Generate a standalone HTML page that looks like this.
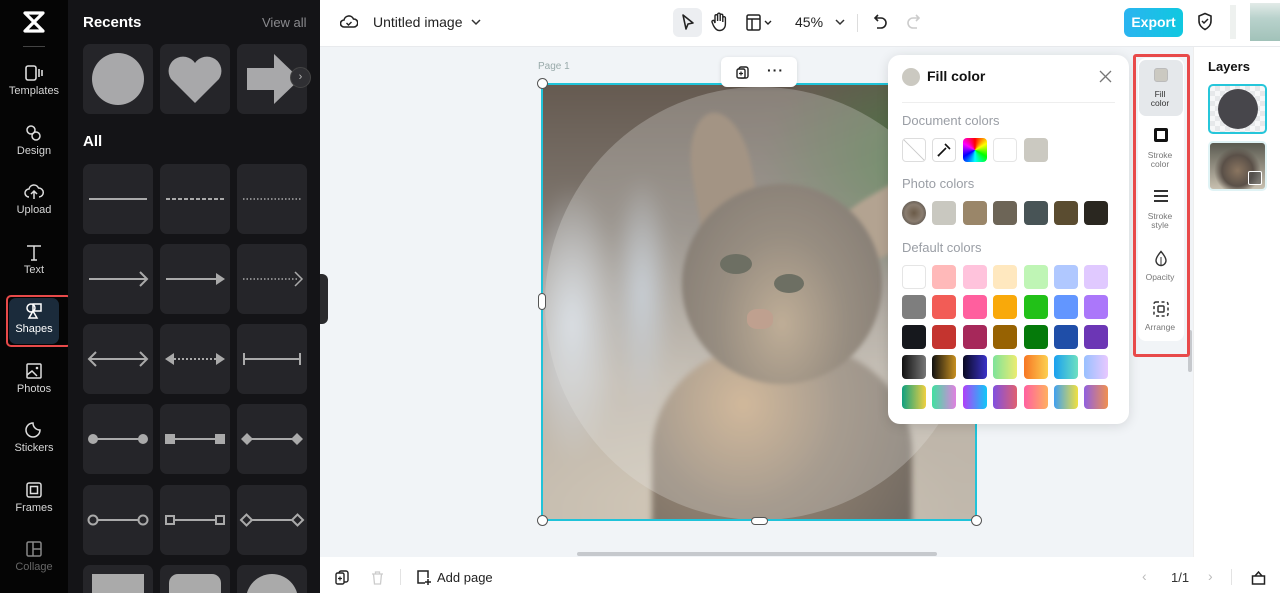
<!DOCTYPE html>
<html style="overflow:hidden;width:1280px;height:593px"><head><meta charset="utf-8">
<style>
*{box-sizing:border-box;margin:0;padding:0}
body{width:1280px;height:593px;overflow:hidden;font-family:"Liberation Sans",sans-serif;background:#f1f4f7;position:relative}
.abs{position:absolute}
.rail{left:0;top:0;width:68px;height:593px;background:#050505}
.ri{position:absolute;left:0;width:68px;text-align:center;color:#d6d6d6;font-size:11px}
.ri svg{display:block;margin:0 auto 3px}
.panel{left:68px;top:0;width:252px;height:593px;background:#141417}
.tile{position:absolute;width:70px;height:70px;background:#252529;border-radius:7px}
.tile svg{position:absolute;left:0;top:0}
.top{left:320px;top:0;width:960px;height:47px;background:#fff;border-bottom:1px solid #e8eaed}
.bot{left:320px;top:557px;width:960px;height:36px;background:#fff}
.sw{position:absolute;width:24px;height:24px;border-radius:4px}
.lbl{position:absolute;left:14px;font-size:13px;color:#9a9ea5}
.tool{position:absolute;left:0;width:44px;text-align:center;font-size:8.5px;color:#777;line-height:9px}
</style></head><body>

<!-- left rail -->
<div class="abs rail">
  <svg class="abs" style="left:22px;top:11px" width="24" height="22" viewBox="0 0 24 22"><path d="M3 2h18L3 20h18Z" fill="none" stroke="#fff" stroke-width="3.2" stroke-linejoin="round"/></svg>
  <div class="abs" style="left:23px;top:46px;width:22px;height:1px;background:#444"></div>
  <div class="ri" style="top:64px"><svg width="20" height="18" viewBox="0 0 20 18"><rect x="2" y="2" width="10" height="14" rx="2" fill="none" stroke="#ddd" stroke-width="1.6"/><path d="M15 5v8M18 6v6" stroke="#ddd" stroke-width="1.6"/></svg>Templates</div>
  <div class="ri" style="top:124px"><svg width="20" height="18" viewBox="0 0 20 18"><circle cx="7" cy="6" r="4" fill="none" stroke="#ddd" stroke-width="1.5"/><circle cx="12" cy="12" r="4" fill="none" stroke="#ddd" stroke-width="1.5"/></svg>Design</div>
  <div class="ri" style="top:183px"><svg width="20" height="18" viewBox="0 0 20 18"><path d="M5 14a4 4 0 010-8 5 5 0 019.5-1A4 4 0 0115 14" fill="none" stroke="#ddd" stroke-width="1.5"/><path d="M10 16V8M7 11l3-3 3 3" fill="none" stroke="#ddd" stroke-width="1.5"/></svg>Upload</div>
  <div class="ri" style="top:243px"><svg width="20" height="18" viewBox="0 0 20 18"><path d="M3 3h14M10 3v14M7 17h6" fill="none" stroke="#ddd" stroke-width="1.5"/></svg>Text</div>
  <div class="abs" style="left:9px;top:298px;width:50px;height:46px;background:#1b2b3b;border-radius:7px"></div>
  <div class="abs" style="left:6px;top:295px;width:66px;height:52px;border:2.5px solid #e84a4a;border-radius:5px"></div>
  <div class="ri" style="top:302px;color:#fff"><svg width="20" height="18" viewBox="0 0 20 18"><circle cx="7" cy="6" r="4" fill="none" stroke="#fff" stroke-width="1.5"/><rect x="9" y="2" width="8" height="7" fill="none" stroke="#fff" stroke-width="1.5"/><path d="M9 9l-4 7h8z" fill="#1b2b3b" stroke="#fff" stroke-width="1.5"/></svg>Shapes</div>
  <div class="ri" style="top:362px"><svg width="20" height="18" viewBox="0 0 20 18"><rect x="3" y="2" width="14" height="14" rx="1" fill="none" stroke="#ddd" stroke-width="1.5"/><path d="M3 13l5-4 5 5" fill="none" stroke="#ddd" stroke-width="1.5"/><circle cx="13" cy="6" r="1.3" fill="#ddd"/></svg>Photos</div>
  <div class="ri" style="top:421px"><svg width="20" height="18" viewBox="0 0 20 18"><path d="M16 9a7 7 0 11-7-7c0 4 3 7 7 7z" fill="none" stroke="#ddd" stroke-width="1.5"/></svg>Stickers</div>
  <div class="ri" style="top:481px"><svg width="20" height="18" viewBox="0 0 20 18"><rect x="3" y="2" width="14" height="14" rx="2" fill="none" stroke="#ddd" stroke-width="1.5"/><rect x="6.5" y="5.5" width="7" height="7" fill="none" stroke="#ddd" stroke-width="1.5"/></svg>Frames</div>
  <div class="ri" style="top:540px;color:#666"><svg width="20" height="18" viewBox="0 0 20 18"><rect x="3" y="2" width="14" height="14" rx="1.5" fill="none" stroke="#888" stroke-width="1.5"/><path d="M9 2v14M9 9h8" stroke="#888" stroke-width="1.5"/></svg>Collage</div>
</div>

<!-- panel -->
<div class="abs panel" style="overflow:hidden">
  <div class="abs" style="left:15px;top:14px;color:#fff;font-weight:bold;font-size:15px">Recents</div>
  <div class="abs" style="left:194px;top:15px;color:#8a8a8e;font-size:13px">View all</div>
  <div class="tile" style="left:15px;top:44px"><svg width="70" height="70"><circle cx="35" cy="35" r="26" fill="#a8a8aa"/></svg></div>
  <div class="tile" style="left:92px;top:44px"><svg width="70" height="70"><path d="M35 59L11 35a13 13 0 0124-16 13 13 0 0124 16z" fill="#a8a8aa"/></svg></div>
  <div class="tile" style="left:169px;top:44px"><svg width="70" height="70"><path d="M10 24h27V10l26 25-26 25V46H10z" fill="#a8a8aa"/></svg></div>
  <div class="abs" style="left:222px;top:67px;width:21px;height:21px;border-radius:50%;background:#2f2f33;border:1px solid #444;color:#bbb;font-size:11px;text-align:center;line-height:19px">›</div>
  <div class="abs" style="left:15px;top:133px;color:#fff;font-weight:bold;font-size:15px">All</div>
<div class="tile" style="left:15px;top:164px"><svg width="70" height="70"><path d="M6 35h58" stroke="#aaa" stroke-width="2"/></svg></div>
<div class="tile" style="left:92px;top:164px"><svg width="70" height="70"><path d="M6 35h58" stroke="#aaa" stroke-width="2" stroke-dasharray="4 2"/></svg></div>
<div class="tile" style="left:169px;top:164px"><svg width="70" height="70"><path d="M6 35h58" stroke="#aaa" stroke-width="1.5" stroke-dasharray="1.5 2"/></svg></div>
<div class="tile" style="left:15px;top:244px"><svg width="70" height="70"><path d="M6 35h58M57 28l7 7-7 7" fill="none" stroke="#aaa" stroke-width="2"/></svg></div>
<div class="tile" style="left:92px;top:244px"><svg width="70" height="70"><path d="M6 35h52" stroke="#aaa" stroke-width="2"/><path d="M56 29l9 6-9 6z" fill="#aaa"/></svg></div>
<div class="tile" style="left:169px;top:244px"><svg width="70" height="70"><path d="M6 35h56" stroke="#aaa" stroke-width="1.5" stroke-dasharray="1.5 2"/><path d="M58 28l7 7-7 7" fill="none" stroke="#aaa" stroke-width="1.5"/></svg></div>
<div class="tile" style="left:15px;top:324px"><svg width="70" height="70"><path d="M6 35h58M13 28l-7 7 7 7M57 28l7 7-7 7" fill="none" stroke="#aaa" stroke-width="2"/></svg></div>
<div class="tile" style="left:92px;top:324px"><svg width="70" height="70"><path d="M14 35h42" stroke="#aaa" stroke-width="2" stroke-dasharray="2 2"/><path d="M5 35l9-6v12zM65 35l-9-6v12z" fill="#aaa"/></svg></div>
<div class="tile" style="left:169px;top:324px"><svg width="70" height="70"><path d="M7 35h56M7 29v12M63 29v12" stroke="#aaa" stroke-width="2"/></svg></div>
<div class="tile" style="left:15px;top:404px"><svg width="70" height="70"><path d="M10 35h50" stroke="#aaa" stroke-width="2"/><circle cx="10" cy="35" r="5" fill="#aaa"/><circle cx="60" cy="35" r="5" fill="#aaa"/></svg></div>
<div class="tile" style="left:92px;top:404px"><svg width="70" height="70"><path d="M10 35h50" stroke="#aaa" stroke-width="2"/><rect x="5" y="30" width="10" height="10" fill="#aaa"/><rect x="55" y="30" width="10" height="10" fill="#aaa"/></svg></div>
<div class="tile" style="left:169px;top:404px"><svg width="70" height="70"><path d="M10 35h50" stroke="#aaa" stroke-width="2"/><path d="M4 35l6-6 6 6-6 6zM54 35l6-6 6 6-6 6z" fill="#aaa"/></svg></div>
<div class="tile" style="left:15px;top:485px"><svg width="70" height="70"><path d="M15 35h40" stroke="#aaa" stroke-width="2"/><circle cx="10" cy="35" r="4.5" fill="none" stroke="#aaa" stroke-width="2"/><circle cx="60" cy="35" r="4.5" fill="none" stroke="#aaa" stroke-width="2"/></svg></div>
<div class="tile" style="left:92px;top:485px"><svg width="70" height="70"><path d="M15 35h40" stroke="#aaa" stroke-width="2"/><rect x="6" y="31" width="8" height="8" fill="none" stroke="#aaa" stroke-width="2"/><rect x="56" y="31" width="8" height="8" fill="none" stroke="#aaa" stroke-width="2"/></svg></div>
<div class="tile" style="left:169px;top:485px"><svg width="70" height="70"><path d="M15 35h40" stroke="#aaa" stroke-width="2"/><path d="M4 35l5.5-5.5 5.5 5.5-5.5 5.5zM55 35l5.5-5.5 5.5 5.5-5.5 5.5z" fill="none" stroke="#aaa" stroke-width="2"/></svg></div>
<div class="tile" style="left:15px;top:565px"><svg width="70" height="70"><rect x="9" y="9" width="52" height="52" fill="#aaa"/></svg></div>
<div class="tile" style="left:92px;top:565px"><svg width="70" height="70"><rect x="9" y="9" width="52" height="52" rx="9" fill="#aaa"/></svg></div>
<div class="tile" style="left:169px;top:565px"><svg width="70" height="70"><circle cx="35" cy="35" r="26" fill="#aaa"/></svg></div>
</div>
<div class="abs" style="left:320px;top:274px;width:8px;height:50px;background:#2a2a2d;border-radius:0 6px 6px 0"></div>

<!-- top bar -->
<div class="abs top">
  <svg class="abs" style="left:20px;top:14px" width="18" height="16" viewBox="0 0 18 16"><path d="M4 13a3.5 3.5 0 010-7 5 5 0 019.5-1 3.8 3.8 0 01.5 8z" fill="none" stroke="#222" stroke-width="1.6"/><path d="M6.5 9l2 2 3-3" fill="none" stroke="#222" stroke-width="1.4"/></svg>
  <div class="abs" style="left:53px;top:14px;font-size:14px;color:#222">Untitled image</div>
  <svg class="abs" style="left:151px;top:18px" width="10" height="8"><path d="M1 2l4 4 4-4" fill="none" stroke="#333" stroke-width="1.5"/></svg>
  <div class="abs" style="left:353px;top:8px;width:29px;height:29px;background:#eceef1;border-radius:6px"></div>
  <svg class="abs" style="left:360px;top:13px" width="16" height="19" viewBox="0 0 16 19"><path d="M3 2l10 8-5 1-2 5z" fill="none" stroke="#222" stroke-width="1.6" stroke-linejoin="round"/></svg>
  <svg class="abs" style="left:390px;top:12px" width="18" height="20" viewBox="0 0 18 20"><path d="M5 11V4a1.3 1.3 0 012.6 0v5V2.5a1.3 1.3 0 012.6 0V9V3.5a1.3 1.3 0 012.6 0V10V6a1.3 1.3 0 012.6 0v6c0 4-2.5 6.5-6 6.5-3 0-4.5-2-6-5L2 10a1.3 1.3 0 012.2-1.2z" fill="none" stroke="#222" stroke-width="1.4"/></svg>
  <svg class="abs" style="left:426px;top:14px" width="30" height="17" viewBox="0 0 30 17"><rect x="1" y="1" width="13" height="15" rx="1.5" fill="none" stroke="#222" stroke-width="1.5"/><path d="M1 5h13M6 5v11" stroke="#222" stroke-width="1.5"/><path d="M19 7l3 3 3-3" fill="none" stroke="#222" stroke-width="1.4"/></svg>
  <div class="abs" style="left:475px;top:14px;font-size:14px;color:#222">45%</div>
  <svg class="abs" style="left:515px;top:18px" width="10" height="8"><path d="M1 2l4 4 4-4" fill="none" stroke="#333" stroke-width="1.5"/></svg>
  <div class="abs" style="left:537px;top:14px;width:1px;height:18px;background:#ddd"></div>
  <svg class="abs" style="left:553px;top:13px" width="16" height="18" viewBox="0 0 16 18"><path d="M5 2L2 5l3 3M2 5h6a5 5 0 010 10H4" fill="none" stroke="#222" stroke-width="1.6"/></svg>
  <svg class="abs" style="left:585px;top:13px" width="16" height="18" viewBox="0 0 16 18"><path d="M11 2l3 3-3 3M14 5H8a5 5 0 000 10h4" fill="none" stroke="#ccc" stroke-width="1.6"/></svg>
  <div class="abs" style="left:804px;top:8px;width:59px;height:29px;border-radius:6px;background:linear-gradient(90deg,#2ab4f0,#10c8e0);color:#fff;font-size:14px;font-weight:bold;text-align:center;line-height:29px">Export</div>
  <svg class="abs" style="left:877px;top:12px" width="16" height="19" viewBox="0 0 16 19"><path d="M8 1.5l6 2.5v5c0 4-3 7-6 8.5C5 16 2 13 2 9V4z" fill="none" stroke="#222" stroke-width="1.6"/><path d="M5 9l2 2 4-4" fill="none" stroke="#222" stroke-width="1.5"/></svg>
  <div class="abs" style="left:910px;top:5px;width:6px;height:34px;background:#eef1ef"></div>
  <div class="abs" style="left:930px;top:3px;width:30px;height:38px;background:linear-gradient(180deg,#e2ebe8 0%,#b9d2cc 40%,#a1c2b9 100%)"></div>
</div>

<!-- canvas -->
<div class="abs" style="left:538px;top:61px;font-size:10px;color:#9aa">Page 1</div>
<div class="abs" style="left:542px;top:84px;width:434px;height:436px;overflow:hidden;background:#8c8578">
  <div class="abs" style="left:-40px;top:-40px;width:520px;height:520px;background:
   radial-gradient(ellipse 50px 140px at 70px 280px,#d8e0ea,transparent),
   radial-gradient(ellipse 30px 120px at 140px 250px,#c0cad6,transparent),
   radial-gradient(ellipse 160px 120px at 420px 120px,#46703e,transparent),
   radial-gradient(ellipse 60px 60px at 470px 70px,#c45a1a,transparent),
   radial-gradient(ellipse 260px 120px at 200px 460px,#d2c8b8,transparent),
   linear-gradient(180deg,#5e5248 0%,#807870 35%,#bdb4a8 65%,#c2baae 100%);filter:blur(8px)"></div>
  <!-- cat -->
  <div class="abs" style="left:110px;top:260px;width:260px;height:240px;border-radius:45% 45% 10% 10%;background:radial-gradient(ellipse at 35% 25%,#c9a780 0%,#8f8070 40%,#66615c 100%);filter:blur(3px)"></div>
  <div class="abs" style="left:150px;top:28px;width:60px;height:120px;background:#8a7560;transform:rotate(-10deg);border-radius:50% 50% 10% 10%;filter:blur(2px)"></div>
  <div class="abs" style="left:280px;top:110px;width:120px;height:60px;background:#a08a72;transform:rotate(-30deg);border-radius:60% 10% 10% 60%;filter:blur(2px)"></div>
  <div class="abs" style="left:140px;top:100px;width:200px;height:200px;border-radius:50%;background:radial-gradient(ellipse at 50% 70%,#b0987a 0%,#7a6c5c 45%,#564c44 100%);filter:blur(2px)"></div>
  <div class="abs" style="left:178px;top:170px;width:32px;height:20px;border-radius:50%;background:#3f4233"></div>
  <div class="abs" style="left:232px;top:190px;width:30px;height:19px;border-radius:50%;background:#3f4233"></div>
  <div class="abs" style="left:205px;top:225px;width:26px;height:20px;border-radius:40%;background:#b08670"></div>
  <!-- translucent circle -->
  <div class="abs" style="left:3px;top:3px;width:430px;height:433px;border-radius:50%;background:rgba(230,230,225,0.28)"></div>
</div>
<div class="abs" style="left:541px;top:83px;width:436px;height:438px;border:2px solid #1fc3d9"></div>
<div class="abs" style="left:537px;top:78px;width:11px;height:11px;border-radius:50%;background:#fff;border:1px solid #555"></div>
<div class="abs" style="left:537px;top:515px;width:11px;height:11px;border-radius:50%;background:#fff;border:1px solid #555"></div>
<div class="abs" style="left:971px;top:515px;width:11px;height:11px;border-radius:50%;background:#fff;border:1px solid #555"></div>
<div class="abs" style="left:538px;top:293px;width:8px;height:17px;border-radius:4px;background:#fff;border:1px solid #555"></div>
<div class="abs" style="left:751px;top:517px;width:17px;height:8px;border-radius:4px;background:#fff;border:1px solid #555"></div>
<div class="abs" style="left:721px;top:57px;width:76px;height:30px;background:#fff;border-radius:6px;box-shadow:0 1px 4px rgba(0,0,0,.12)"></div>
<svg class="abs" style="left:735px;top:65px" width="15" height="15" viewBox="0 0 15 15"><rect x="4" y="2" width="9" height="11" rx="2" fill="none" stroke="#222" stroke-width="1.4"/><rect x="2" y="4" width="8" height="9" rx="1.5" fill="#fff" stroke="#222" stroke-width="1.4"/><path d="M6 6.5v4M4 8.5h4" stroke="#222" stroke-width="1.2"/></svg>
<div class="abs" style="left:767px;top:62px;font-size:14px;font-weight:bold;color:#222;letter-spacing:1px">···</div>
<div class="abs" style="left:577px;top:552px;width:360px;height:4px;border-radius:2px;background:#c6c9cd"></div>
<div class="abs" style="left:1188px;top:330px;width:4px;height:42px;border-radius:2px;background:#c6c9cd"></div>

<!-- fill color popup -->
<div class="abs" style="left:888px;top:55px;width:241px;height:369px;background:#fff;border-radius:12px;box-shadow:0 2px 12px rgba(0,0,0,.12)">
  <div class="abs" style="left:14px;top:13px;width:18px;height:18px;border-radius:50%;background:#cbc9c1"></div>
  <div class="abs" style="left:39px;top:13px;font-size:14px;font-weight:bold;color:#111">Fill color</div>
  <svg class="abs" style="left:211px;top:15px" width="13" height="13"><path d="M1 1l11 11M12 1L1 12" stroke="#777" stroke-width="1.3"/></svg>
  <div class="abs" style="left:14px;top:47px;width:213px;height:1px;background:#eee"></div>
  <div class="lbl" style="top:58px">Document colors</div>
  <div class="sw" style="left:14px;top:83px;border:1px solid #ddd;background:linear-gradient(45deg,#fff 48%,#ccc 49%,#ccc 51%,#fff 52%)"></div>
  <div class="sw" style="left:44px;top:83px;border:1px solid #ddd;background:#fff"><svg width="22" height="22" viewBox="0 0 22 22"><path d="M6 16l7-7M13 6l3 3M12 5l5 5" stroke="#111" stroke-width="1.6" fill="none"/><path d="M5 17l1-1" stroke="#111" stroke-width="2"/></svg></div>
  <div class="sw" style="left:75px;top:83px;background:conic-gradient(red,#ff0,lime,cyan,blue,#f0f,red)"></div>
  <div class="sw" style="left:105px;top:83px;border:1px solid #e5e5e5;background:#fff"></div>
  <div class="sw" style="left:136px;top:83px;background:#cbc9c1"></div>
  <div class="lbl" style="top:121px">Photo colors</div>
  <div class="sw" style="left:14px;top:146px;border-radius:50%;background:radial-gradient(circle at 50% 50%,#6b5b48,#8a7d70 50%,#3c3a36)"></div>
  <div class="sw" style="left:44px;top:146px;background:#c9c8c0"></div>
  <div class="sw" style="left:75px;top:146px;background:#9a8669"></div>
  <div class="sw" style="left:105px;top:146px;background:#6d6557"></div>
  <div class="sw" style="left:136px;top:146px;background:#485456"></div>
  <div class="sw" style="left:166px;top:146px;background:#5a4c30"></div>
  <div class="sw" style="left:196px;top:146px;background:#2a2720"></div>
  <div class="lbl" style="top:185px">Default colors</div>
  <div class="abs" style="left:14px;top:210px">
   <div class="sw" style="left:0;top:0;background:#fff;border:1px solid #e5e5e5"></div>
   <div class="sw" style="left:30px;top:0;background:#ffb9b9"></div>
   <div class="sw" style="left:61px;top:0;background:#ffc3dc"></div>
   <div class="sw" style="left:91px;top:0;background:#ffe8bf"></div>
   <div class="sw" style="left:122px;top:0;background:#bff5b5"></div>
   <div class="sw" style="left:152px;top:0;background:#b0c8ff"></div>
   <div class="sw" style="left:182px;top:0;background:#e0c9ff"></div>
   <div class="sw" style="left:0;top:30px;background:#7e7e7e"></div>
   <div class="sw" style="left:30px;top:30px;background:#f25c56"></div>
   <div class="sw" style="left:61px;top:30px;background:#ff5f9e"></div>
   <div class="sw" style="left:91px;top:30px;background:#f9a90a"></div>
   <div class="sw" style="left:122px;top:30px;background:#22c118"></div>
   <div class="sw" style="left:152px;top:30px;background:#6296ff"></div>
   <div class="sw" style="left:182px;top:30px;background:#ab77fa"></div>
   <div class="sw" style="left:0;top:60px;background:#16181d"></div>
   <div class="sw" style="left:30px;top:60px;background:#c4342f"></div>
   <div class="sw" style="left:61px;top:60px;background:#a6285a"></div>
   <div class="sw" style="left:91px;top:60px;background:#976202"></div>
   <div class="sw" style="left:122px;top:60px;background:#057a0a"></div>
   <div class="sw" style="left:152px;top:60px;background:#1f4ea8"></div>
   <div class="sw" style="left:182px;top:60px;background:#6c36b5"></div>
   <div class="sw" style="left:0;top:90px;background:linear-gradient(90deg,#111,#777)"></div>
   <div class="sw" style="left:30px;top:90px;background:linear-gradient(90deg,#111,#c89020)"></div>
   <div class="sw" style="left:61px;top:90px;background:linear-gradient(90deg,#0a0a22,#3a32c8)"></div>
   <div class="sw" style="left:91px;top:90px;background:linear-gradient(90deg,#7ee39a,#ecec70)"></div>
   <div class="sw" style="left:122px;top:90px;background:linear-gradient(90deg,#f77624,#fcd050)"></div>
   <div class="sw" style="left:152px;top:90px;background:linear-gradient(90deg,#1aa0f0,#6ee0c0)"></div>
   <div class="sw" style="left:182px;top:90px;background:linear-gradient(90deg,#98c0ff,#e8c8ff)"></div>
   <div class="sw" style="left:0;top:120px;background:linear-gradient(90deg,#10a080,#f0d040)"></div>
   <div class="sw" style="left:30px;top:120px;background:linear-gradient(90deg,#40e0a0,#e080e0)"></div>
   <div class="sw" style="left:61px;top:120px;background:linear-gradient(90deg,#b040f8,#10c8f8)"></div>
   <div class="sw" style="left:91px;top:120px;background:linear-gradient(90deg,#8050e0,#e06070)"></div>
   <div class="sw" style="left:122px;top:120px;background:linear-gradient(90deg,#ff60a0,#ffb060)"></div>
   <div class="sw" style="left:152px;top:120px;background:linear-gradient(90deg,#40a0f0,#f0e040)"></div>
   <div class="sw" style="left:182px;top:120px;background:linear-gradient(90deg,#9060e0,#f09050)"></div>
  </div>
</div>

<!-- tool column -->
<div class="abs" style="left:1133px;top:54px;width:57px;height:303px;border:3px solid #e84a4a;border-radius:3px"></div>
<div class="abs" style="left:1138px;top:58px;width:46px;height:283px;background:#fff;border-radius:8px">
  <div class="abs" style="left:1px;top:2px;width:44px;height:56px;background:#e5e8eb;border-radius:7px"></div>
  <div class="abs" style="left:16px;top:10px;width:14px;height:14px;border-radius:3px;background:#cbc9c1;border:1px solid #bbb"></div>
  <div class="tool" style="top:32px;color:#333">Fill<br>color</div>
  <div class="abs" style="left:16px;top:70px;width:14px;height:14px;border:3px solid #111;border-radius:2px"></div>
  <div class="tool" style="top:93px">Stroke<br>color</div>
  <svg class="abs" style="left:15px;top:131px" width="16" height="14"><path d="M1 2h14M1 7h14M1 12h14" stroke="#333" stroke-width="2"/></svg>
  <div class="tool" style="top:154px">Stroke<br>style</div>
  <svg class="abs" style="left:15px;top:192px" width="16" height="17" viewBox="0 0 16 17"><path d="M8 1.5C5 5 3 8 3 10.5a5 5 0 0010 0C13 8 11 5 8 1.5z" fill="none" stroke="#333" stroke-width="1.4"/><path d="M8 7v8" stroke="#333" stroke-width="1"/></svg>
  <div class="tool" style="top:215px">Opacity</div>
  <svg class="abs" style="left:15px;top:243px" width="16" height="16" viewBox="0 0 16 16"><rect x="1" y="1" width="14" height="14" rx="2" fill="none" stroke="#333" stroke-width="1.5" stroke-dasharray="3 2.5"/><rect x="5" y="5" width="6" height="6" rx="1" fill="none" stroke="#333" stroke-width="1.5"/></svg>
  <div class="tool" style="top:265px">Arrange</div>
</div>

<!-- layers -->
<div class="abs" style="left:1193px;top:47px;width:87px;height:510px;background:#fff;border-left:1px solid #eee">
  <div class="abs" style="left:14px;top:12px;font-size:13px;font-weight:bold;color:#111">Layers</div>
  <div class="abs" style="left:14px;top:37px;width:59px;height:50px;border:2px solid #26c6da;border-radius:5px;background:repeating-conic-gradient(#e6e8ea 0 25%,#f6f7f8 0 50%) 0 0/10px 10px"></div>
  <div class="abs" style="left:24px;top:42px;width:40px;height:40px;border-radius:50%;background:#47464b"></div>
  <div class="abs" style="left:14px;top:94px;width:59px;height:50px;border:2px solid #e0f3f5;border-radius:5px;background:radial-gradient(ellipse at 50% 60%,#8a7560,#5a5048 40%,transparent 60%),linear-gradient(180deg,#5a5a50,#c8c0b0)"></div>
  <div class="abs" style="left:54px;top:124px;width:14px;height:14px;border:1.5px solid #fff;border-radius:2px;background:rgba(80,80,80,.6)"></div>
</div>

<!-- bottom bar -->
<div class="abs bot">
  <svg class="abs" style="left:15px;top:13px" width="14" height="15" viewBox="0 0 14 15"><rect x="4" y="1" width="9" height="11" rx="2" fill="none" stroke="#222" stroke-width="1.4"/><rect x="1" y="3" width="8" height="11" rx="1.5" fill="#fff" stroke="#222" stroke-width="1.4"/><path d="M5 6.5v4M3 8.5h4" stroke="#222" stroke-width="1.2"/></svg>
  <svg class="abs" style="left:51px;top:13px" width="13" height="15" viewBox="0 0 13 15"><path d="M1 4h11M4.5 4V2h4v2M2.5 4l1 10h6l1-10" fill="none" stroke="#ccc" stroke-width="1.3"/></svg>
  <div class="abs" style="left:80px;top:12px;width:1px;height:16px;background:#e3e3e3"></div>
  <svg class="abs" style="left:96px;top:12px" width="16" height="17" viewBox="0 0 16 17"><path d="M9 14H2V2h10v7" fill="none" stroke="#222" stroke-width="1.5"/><path d="M12 10v6M9 13h6" stroke="#222" stroke-width="1.5"/></svg>
  <div class="abs" style="left:117px;top:13px;font-size:13px;color:#222">Add page</div>
  <div class="abs" style="left:822px;top:11px;font-size:14px;color:#bbb">‹</div>
  <div class="abs" style="left:851px;top:13px;font-size:13px;color:#333">1/1</div>
  <div class="abs" style="left:888px;top:11px;font-size:14px;color:#bbb">›</div>
  <div class="abs" style="left:911px;top:12px;width:1px;height:16px;background:#e3e3e3"></div>
  <svg class="abs" style="left:931px;top:12px" width="15" height="16" viewBox="0 0 15 16"><rect x="1.5" y="7" width="12" height="8" fill="none" stroke="#222" stroke-width="1.5"/><path d="M4 7l3.5-4 3.5 4" fill="none" stroke="#222" stroke-width="1.5"/></svg>
</div>
</body></html>
